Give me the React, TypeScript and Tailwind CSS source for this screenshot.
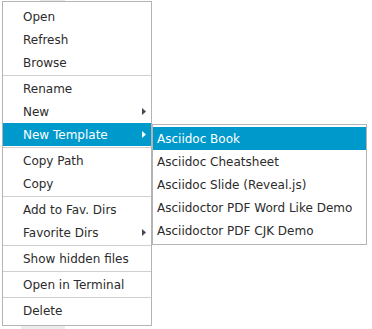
import React from 'react';

type Entry = { label: string; sub?: boolean; active?: boolean } | 'sep';

const mainItems: Entry[] = [
    { label: 'Open' },
    { label: 'Refresh' },
    { label: 'Browse' },
    'sep',
    { label: 'Rename' },
    { label: 'New', sub: true },
    { label: 'New Template', sub: true, active: true },
    'sep',
    { label: 'Copy Path' },
    { label: 'Copy' },
    'sep',
    { label: 'Add to Fav. Dirs' },
    { label: 'Favorite Dirs', sub: true },
    'sep',
    { label: 'Show hidden files' },
    'sep',
    { label: 'Open in Terminal' },
    'sep',
    { label: 'Delete' },
];

const templates = [
    'Asciidoc Book',
    'Asciidoc Cheatsheet',
    'Asciidoc Slide (Reveal.js)',
    'Asciidoctor PDF Word Like Demo',
    'Asciidoctor PDF CJK Demo',
];

const Arrow = ({ light }: { light?: boolean }) => (
    <svg width="4" height="7" viewBox="0 0 4 7" className="absolute right-[5px] top-[8px]">
        <path d="M0 0 L4 3.5 L0 7 Z" fill={light ? '#ffffff' : '#4a4556'} />
    </svg>
);

export default function App() {
    return (
        <div
            className="relative w-[372px] h-[329px] bg-white overflow-hidden text-[12px] text-[#2b2b2b]"
            style={{ fontFamily: '"DejaVu Sans", Verdana, sans-serif' }}
        >
            <div className="absolute left-[40px] top-0 w-[25px] h-px bg-[#e6e6e6]" />
            <div className="absolute left-[21px] top-[326px] w-[44px] h-[3px] bg-[#ececec]" />

            <div className="absolute left-[2px] top-[1px] w-[150px] border border-[#b4b4b4] bg-white py-[3px]">
                {mainItems.map((item, i) =>
                    item === 'sep' ? (
                        <div key={i} className="h-px bg-[#cfcfcf] my-[1px]" />
                    ) : (
                        <div
                            key={i}
                            className={`relative h-[23px] leading-[25px] pl-[20px] whitespace-nowrap overflow-hidden ${
                                item.active ? 'bg-[#0099cc] text-white' : ''
                            }`}
                        >
                            {item.label}
                            {item.sub && <Arrow light={item.active} />}
                        </div>
                    )
                )}
            </div>

            <div className="absolute left-[152px] top-[124px] w-[215px] border border-[#b4b4b4] bg-white pt-[2px] pb-[2px]">
                {templates.map((t, i) => (
                    <div
                        key={t}
                        className={`h-[23px] leading-[25px] pl-[4px] whitespace-nowrap overflow-hidden ${
                            i === 0 ? 'bg-[#0099cc] text-white' : ''
                        }`}
                    >
                        {t}
                    </div>
                ))}
            </div>
        </div>
    );
}
